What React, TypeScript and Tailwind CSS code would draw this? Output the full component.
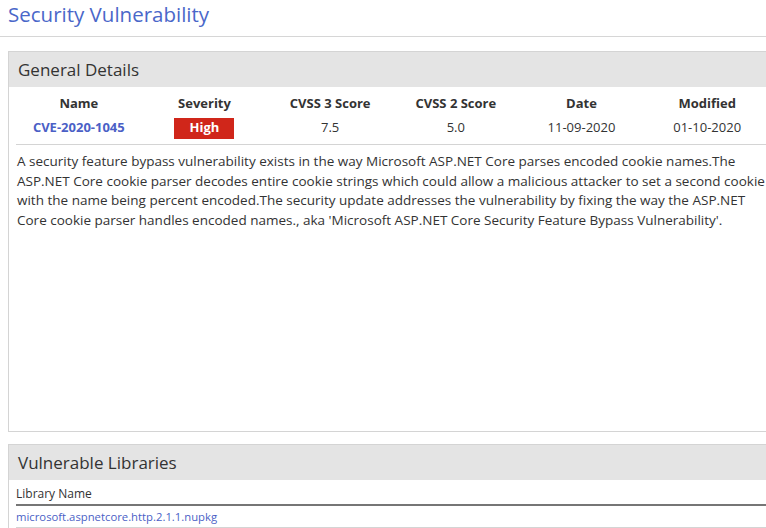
import React from 'react';

const cols = [
    { label: 'Name', value: 'CVE-2020-1045', kind: 'link' },
    { label: 'Severity', value: 'High', kind: 'badge' },
    { label: 'CVSS 3 Score', value: '7.5' },
    { label: 'CVSS 2 Score', value: '5.0' },
    { label: 'Date', value: '11-09-2020' },
    { label: 'Modified', value: '01-10-2020' },
];

const description =
    "A security feature bypass vulnerability exists in the way Microsoft ASP.NET Core parses encoded cookie names.The ASP.NET Core cookie parser decodes entire cookie strings which could allow a malicious attacker to set a second cookie with the name being percent encoded.The security update addresses the vulnerability by fixing the way the ASP.NET Core cookie parser handles encoded names., aka 'Microsoft ASP.NET Core Security Feature Bypass Vulnerability'.";

const App = () => {
    return (
        <div className="w-[766px] h-[528px] overflow-hidden bg-white text-[#333] font-['Open_Sans',sans-serif]">
            <div className="w-[786px]">
                {/* Title */}
                <div className="h-[37px] border-b border-[#d6d6d6] px-2">
                    <h1 className="text-[20.5px] leading-[28px] text-[#4a67c9]">Security Vulnerability</h1>
                </div>

                <div className="px-2 pt-[14px]">
                    {/* General Details */}
                    <div className="h-[381px] border border-[#d4d4d4]">
                        <div className="h-[35px] bg-[#e4e4e4] px-[9px] flex items-center">
                            <h2 className="text-[17px] text-[#333]">General Details</h2>
                        </div>
                        <div className="px-[7px]">
                            <div className="grid grid-cols-6 border-b border-[#d4d4d4] pt-[4px] pb-[3px]">
                                {cols.map((c) => (
                                    <div key={c.label} className="flex flex-col items-center">
                                        <div className="text-[13px] font-bold leading-[24px]">{c.label}</div>
                                        <div className="h-[26px] flex items-center">
                                            {c.kind === 'link' ? (
                                                <span className="text-[13px] font-bold text-[#4b5fc6]">{c.value}</span>
                                            ) : c.kind === 'badge' ? (
                                                <span className="w-[60px] h-[21px] bg-[#d0261a] text-white text-[13px] font-bold flex items-center justify-center">
                                                    {c.value}
                                                </span>
                                            ) : (
                                                <span className="text-[13px]">{c.value}</span>
                                            )}
                                        </div>
                                    </div>
                                ))}
                            </div>
                            <p className="text-[13.5px] leading-[19.7px] pt-[7px] pl-[1px]">{description}</p>
                        </div>
                    </div>

                    {/* Vulnerable Libraries */}
                    <div className="mt-[12px] border border-[#d4d4d4] border-b-0">
                        <div className="h-[35px] bg-[#e4e4e4] px-[9px] flex items-center">
                            <h2 className="text-[17px] text-[#333]">Vulnerable Libraries</h2>
                        </div>
                        <div className="px-[7px] pt-[5px]">
                            <div className="text-[12px] leading-[18px] pb-[1px] border-b-2 border-[#767676]">Library Name</div>
                            <div className="text-[11.3px] leading-[21px] text-[#4b5fc6] border-b border-[#d4d4d4]">
                                microsoft.aspnetcore.http.2.1.1.nupkg
                            </div>
                        </div>
                    </div>
                </div>
            </div>
        </div>
    );
};

export default App;
